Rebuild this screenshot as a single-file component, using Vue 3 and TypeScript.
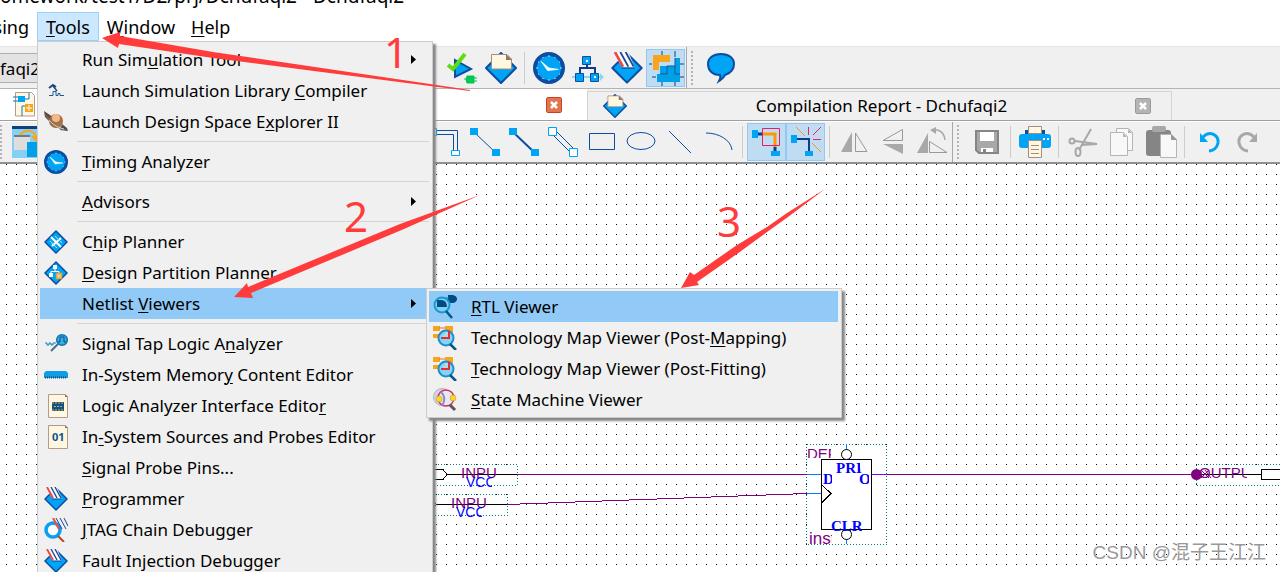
<script setup lang="ts">
interface Entry {
  id: string
  label?: string
  icon?: string
  sub?: boolean
  active?: boolean
}

const parts = (label: string): string[] => {
  const i = label.indexOf('&')
  return i < 0 ? [label, '', ''] : [label.slice(0, i), label[i + 1], label.slice(i + 2)]
}

const tools: Entry[] = [
  { id: 'run', label: 'Run Sim&ulation Tool', sub: true },
  { id: 'lib', label: 'Launch Simulation Library &Compiler', icon: 'simlib' },
  { id: 'dse', label: 'Launch Design Space E&xplorer II', icon: 'planet' },
  { id: 's1' },
  { id: 'time', label: '&Timing Analyzer', icon: 'clock' },
  { id: 's2' },
  { id: 'adv', label: '&Advisors', sub: true },
  { id: 's3' },
  { id: 'chip', label: 'C&hip Planner', icon: 'chip' },
  { id: 'part', label: '&Design Partition Planner', icon: 'partition' },
  { id: 'net', label: 'Netlist &Viewers', sub: true, active: true },
  { id: 's4' },
  { id: 'tap', label: 'Signal Tap Logic A&nalyzer', icon: 'tap' },
  { id: 'mem', label: 'In-System Memor&y Content Editor', icon: 'memory' },
  { id: 'lai', label: 'Logic Analyzer Interface Edito&r', icon: 'logic' },
  { id: 'src', label: 'In&-System Sources and Probes Editor', icon: 'probes' },
  { id: 'pins', label: '&Signal Probe Pins...' },
  { id: 'prog', label: '&Programmer', icon: 'programmer' },
  { id: 'jtag', label: '&JTAG Chain Debugger', icon: 'jtag' },
  { id: 'fault', label: 'Fault Injection Debugger', icon: 'programmer' },
]

const viewers: Entry[] = [
  { id: 'rtl', label: '&RTL Viewer', icon: 'rtl', active: true },
  { id: 'map', label: 'Technology Map Viewer (Post-&Mapping)', icon: 'techmap' },
  { id: 'fit', label: '&Technology Map Viewer (Post-Fitting)', icon: 'techmap' },
  { id: 'fsm', label: '&State Machine Viewer', icon: 'state' },
]
</script>

<template>
  <div class="app">
    <svg class="defs" aria-hidden="true">
      <defs>
        <symbol id="i-simlib" viewBox="0 0 24 24">
          <path d="M5 9l4-3 3 2" fill="none" stroke="#1c4a78" stroke-width="2" />
          <path d="M9 7l4 5" fill="none" stroke="#1c4a78" stroke-width="1.500" />
          <path d="M5 16.500h4v-4h3v4h2v-2h2v2h4" fill="none" stroke="#1c5a8c" stroke-width="1" />
        </symbol>
        <symbol id="i-planet" viewBox="0 0 24 24">
          <path d="M0 1l9 6-3 5-5-5zM24 21l-8-1 2-6 5 4z" fill="#5b4b46" />
          <circle cx="12" cy="11" r="7" fill="#b9683c" />
          <circle cx="12" cy="8" r="4" fill="#f2b988" />
          <path d="M6 11q6 3 12 2M6 13q5 4 11 3" stroke="#6f8a5d" fill="none" />
          <path d="M1 4c3 8 14 17 22 16-5-1-14-6-18-12" fill="#7d6b65" />
          <path d="M5 10c4 5 10 8 15 9" stroke="#e3d6cd" fill="none" />
        </symbol>
        <symbol id="i-clock" viewBox="0 0 24 24">
          <circle cx="12" cy="12" r="10.500" fill="#00a4f4" stroke="#0c4da2" stroke-width="3" />
          <path d="M6 7l6 5 7 1-8 1z" fill="#fff" stroke="#fff" stroke-width=".5" />
          <g fill="#fff">
            <circle cx="12" cy="3" r=".5" /><circle cx="12" cy="21" r=".5" /><circle cx="3" cy="12" r=".5" /><circle cx="21" cy="12" r=".5" />
            <circle cx="7.500" cy="4.200" r=".4" /><circle cx="16.500" cy="4.200" r=".4" /><circle cx="7.500" cy="19.800" r=".4" /><circle cx="16.500" cy="19.800" r=".4" />
            <circle cx="4.200" cy="7.500" r=".4" /><circle cx="19.800" cy="7.500" r=".4" /><circle cx="4.200" cy="16.500" r=".4" /><circle cx="19.800" cy="16.500" r=".4" />
          </g>
        </symbol>
        <symbol id="i-chip" viewBox="0 0 24 24">
          <path d="M12 1l11 11-11 11L1 12z" fill="#00a4f4" stroke="#0c4da2" stroke-width="1.500" stroke-linejoin="round" />
          <path d="M7 7l10 10M17 8l-9 8" stroke="#fff" stroke-width="2" />
          <path d="M11 6l7 7M6 11l7 7" stroke="#a6dcf8" />
        </symbol>
        <symbol id="i-partition" viewBox="0 0 24 24">
          <path d="M12 1l11 11-11 11L1 12z" fill="#00a4f4" stroke="#0c4da2" stroke-width="1.500" stroke-linejoin="round" />
          <path d="M9 4h4v4H9zM5 12h4v4H5z" fill="#fff" />
          <path d="M11 8v3M7 12v-1.500h8v2" fill="none" stroke="#fff" />
          <path d="M12.500 12.500h5v5h-5z" fill="#c9d6c8" stroke="#f6a11c" stroke-width="1.500" />
        </symbol>
        <symbol id="i-tap" viewBox="0 0 24 24">
          <path d="M1 11h2v2h2v-2h2v2h2v-2h3" fill="none" stroke="#1482b4" />
          <circle cx="18" cy="8" r="5.300" fill="#3aaede" stroke="#0678b0" stroke-width="1.500" />
          <path d="M14 10h2V5h4v5h2" fill="none" stroke="#064f87" />
          <path d="M14 12l-7 7" stroke="#466d91" stroke-width="2" />
        </symbol>
        <symbol id="i-memory" viewBox="0 0 24 24">
          <path d="M2 8h20l2 2v5H0v-5z" fill="#109de5" />
          <path d="M1 14.500h22" stroke="#174e7c" stroke-width="2" stroke-dasharray="1 1" />
        </symbol>
        <symbol id="i-logic" viewBox="0 0 24 24">
          <path d="M4.500.5H21l2.500 2.500v20.500h-19z" fill="#fff7df" stroke="#b39a8c" />
          <path d="M21 0v3h3" fill="#8f7468" />
          <path d="M8 8h12v9H8z" fill="#0e538f" />
          <path d="M8 9h12M8 16h12M10 12.500h8" stroke="#edab24" stroke-dasharray="2 1" />
        </symbol>
        <symbol id="i-probes" viewBox="0 0 24 24">
          <path d="M4.500.5H21l2.500 2.500v20.500h-19z" fill="#fff7df" stroke="#b39a8c" />
          <path d="M21 0v3h3" fill="#8f7468" />
          <text x="8" y="16" font-size="11" font-weight="700" fill="#0e538f">01</text>
        </symbol>
        <symbol id="i-programmer" viewBox="0 0 24 24">
          <path d="M12 1l11 11-11 11L1 12z" fill="#00a4f4" stroke="#0c4da2" stroke-width="1.500" stroke-linejoin="round" />
          <path d="M1 0h12l5 12h-9z" fill="#f0f0f0" />
          <path d="M8 12h10" stroke="#0c4da2" stroke-width="1" />
          <path d="M3 0l6 11" stroke="#f04b41" stroke-width="2" />
          <path d="M5 0l6 11M9 0l6 11" stroke="#fff" stroke-width="1" />
          <path d="M7 0l6 11M11 0l6 11" stroke="#17479b" stroke-width="1.300" />
        </symbol>
        <symbol id="i-jtag" viewBox="0 0 24 24">
          <circle cx="9" cy="12" r="7" fill="#fff" stroke="#0aa0f2" stroke-width="3.500" />
          <path d="M14 18l6 6" stroke="#b4471e" stroke-width="2" />
          <path d="M9 0l6 11" stroke="#f04b41" stroke-width="2" />
          <path d="M12 0l6 11M16 0l6 11M20 0l4 8" stroke="#17479b" />
        </symbol>
        <symbol id="i-rtl" viewBox="0 0 24 24">
          <path d="M15 0h5q4 1 4 4t-4 4h-5z" fill="#004b82" />
          <path d="M10 3h6" stroke="#0871a8" />
          <circle cx="9" cy="10" r="7.500" fill="#86cdf2" stroke="#159bd1" stroke-width="2" />
          <path d="M4 12V5h5q5 1 5 7z" fill="#004b82" />
          <path d="M13 16l6 7" stroke="#005989" stroke-width="2.500" />
        </symbol>
        <symbol id="i-techmap" viewBox="0 0 24 24">
          <path d="M0 0h7v5H0zM12 0h8v7h-8zM0 8h7v4H0z" fill="#f9a51b" />
          <path d="M6 2h6" stroke="#e76a47" />
          <circle cx="13" cy="12" r="7.500" fill="#86d4f5" stroke="#1b91c8" stroke-width="2" />
          <path d="M10 11V9h2V6h3v5z" fill="#b5d9e4" />
          <path d="M8 12h8V5" fill="none" stroke="#e52b36" stroke-width="2" />
          <path d="M17 18l6 6" stroke="#005989" stroke-width="2.500" />
        </symbol>
        <symbol id="i-state" viewBox="0 0 24 24">
          <circle cx="9" cy="9" r="8.500" fill="#d0d4e4" stroke="#aeb4ca" />
          <circle cx="13" cy="10" r="8" fill="#e6e8f4" stroke="#d62b59" stroke-width="1.500" />
          <path d="M8 4q6 5 1 14" stroke="#8b8fba" stroke-width="2" fill="none" />
          <circle cx="6" cy="11" r="3" fill="#fdd52c" stroke="#b9941c" stroke-width=".5" />
          <circle cx="20" cy="10" r="3" fill="#fdd52c" stroke="#b9941c" stroke-width=".5" />
          <path d="M17 17l5 5" stroke="#5d5262" stroke-width="3" />
        </symbol>
        <symbol id="i-report" viewBox="0 0 32 32">
          <path d="M16 1l15 15-15 15L1 16z" fill="#00a4f4" stroke="#0c4da2" stroke-width="2" stroke-linejoin="round" />
          <path d="M6.500 2.500H22l4.500 4.500v10h-20z" fill="#fff7df" stroke="#a58c7e" />
          <path d="M21 2v6h6z" fill="#8f7468" />
        </symbol>
      </defs>
    </svg>

    <header class="title">omework/test1/D2/prj/Dchufaqi2 - Dchufaqi2</header>

    <nav class="menubar">
      <button class="menu-btn cut">sing</button>
      <button class="menu-btn open"><u>T</u>ools</button>
      <button class="menu-btn"><u>W</u>indow</button>
      <button class="menu-btn"><u>H</u>elp</button>
    </nav>

    <div class="bar main-bar">
      <div class="combo">faqi2</div>
      <div class="tools first">
        <button class="tool" aria-label="Start compilation check">
          <svg width="32" height="32" viewBox="0 0 32 32">
            <path d="M9 8l16 9-16 8z" fill="#00a4f4" stroke="#0c4da2" stroke-width="2" />
            <path d="M2 13l5 4L19 2" fill="none" stroke="#5fdc14" stroke-width="4" />
            <path d="M21 24h7v7h-7q-2-3 0-7zM18 27h3M28 26h3M28 29h3" fill="#00c853" stroke="#00c853" />
          </svg>
        </button>
        <button class="tool" aria-label="Compilation report"><svg width="32" height="32"><use href="#i-report" /></svg></button>
        <i class="line" />
        <button class="tool" aria-label="Timing analyzer"><svg width="32" height="32"><use href="#i-clock" /></svg></button>
        <button class="tool" aria-label="Netlist hierarchy">
          <svg width="32" height="32" viewBox="0 0 32 32">
            <path d="M0 25h29" stroke="#8bd6f5" stroke-width="2" /><path d="M28 21l4 4-4 4z" fill="#8bd6f5" />
            <path d="M15 12v4M8 21v-5h15v5" fill="none" stroke="#0c3c92" stroke-width="2" />
            <path d="M10.500 4.500h8v8h-8zM3.500 21.500h8v8h-8zM18.500 21.500h8v8h-8z" fill="#00a4f4" stroke="#0c4da2" />
            <path d="M14 8h2v2h-2zM22 24h2v2h-2z" fill="#fff" />
          </svg>
        </button>
        <button class="tool" aria-label="Programmer"><svg width="32" height="32"><use href="#i-programmer" /></svg></button>
        <button class="tool on" aria-label="Chip planner">
          <svg width="36" height="36" viewBox="0 0 36 36">
            <path d="M5 5h17v7H11v8H5z" fill="#f9a51b" />
            <path d="M27 8h5v24H9v-8h3v-8h15z" fill="#00a0e9" />
            <path d="M27 8v8h-8M19 16v8h-7M27 16v8h5" fill="none" stroke="#0c5b96" />
            <path d="M14 1v4M27 1v6M32 14h4M4 27h4M14 32v4M27 32v4M32 27h4M1 14h3" fill="none" stroke="#0c4278" />
          </svg>
        </button>
        <i class="edge" /><i class="grip" />
        <button class="tool talk" aria-label="Feedback">
          <svg width="32" height="32" viewBox="0 0 32 32"><path d="M16 2c8 0 13 4 13 10 0 5-3 9-9 11-1 3-3 4-6 6 1-2 2-4 1-6C7 23 3 18 3 12 3 6 8 2 16 2z" fill="#00a4f4" stroke="#0c4da2" stroke-width="2" /></svg>
        </button>
      </div>
    </div>

    <div class="tabs">
      <div class="tab current">
        <svg width="22" height="26" viewBox="0 0 22 26">
          <path d="M2.500.5h16l3 3v20.500h-19z" fill="#fff7df" stroke="#b39a8c" />
          <path d="M5 4h7v6H5z" fill="#00a4f4" /><path d="M0 5h5M0 9h5M12 7h4V1M9 24V14h6" fill="none" stroke="#0f78bb" />
          <path d="M12 12h8v8h-8z" fill="#f9a51b" /><path d="M16 13v6M13 16h6" stroke="#fff" />
        </svg>
        <button class="close red" aria-label="Close tab"><svg width="14" height="14" viewBox="0 0 14 14"><path d="M4 4l6 6M10 4l-6 6" stroke="#fff" stroke-width="2.500" /></svg></button>
      </div>
      <div class="tab report">
        <svg width="24" height="24"><use href="#i-report" /></svg>
        <span>Compilation Report - Dchufaqi2</span>
        <button class="close" aria-label="Close report"><svg width="14" height="14" viewBox="0 0 14 14"><path d="M4 4l6 6M10 4l-6 6" stroke="#fff" stroke-width="2.500" /></svg></button>
      </div>
    </div>

    <div class="bar draw-bar">
      <i class="grip" />
      <button class="tool detach" aria-label="Detach window">
        <svg width="34" height="32" viewBox="0 0 34 32"><path d="M0 0h34v32H0z" fill="#86d0f3" /><path d="M0 0h34v3H0z" fill="#0c4278" /><path d="M2 9h16v15H2z" fill="#ddd" /><path d="M2 9h16v2H2z" fill="#777" /><path d="M15 16h19v15H15z" fill="#00a0e9" /><path d="M8 9c4-6 14-6 16 2" fill="none" stroke="#f9a51b" stroke-width="2" /><path d="M19 10h9l-4 6z" fill="#f9a51b" /></svg>
      </button>
      <div class="tools second">
        <button class="tool" aria-label="Orthogonal conduit"><svg width="32" height="32" viewBox="0 0 32 32"><path d="M4 4.500h23.500v20M4 8.500h19.500v16" fill="none" stroke="#0c4da2" /><path d="M21.500 24.500h8v5h-8zM.5 2.500h6v7h-6z" fill="#fff" stroke="#00a4f4" /></svg></button>
        <button class="tool" aria-label="Node line"><svg width="32" height="32" viewBox="0 0 32 32"><path d="M5 6l22 21" stroke="#0c4da2" /><path d="M1 2h8v7H1zM23 23h8v7h-8z" fill="#00a4f4" /></svg></button>
        <button class="tool" aria-label="Bus line"><svg width="32" height="32" viewBox="0 0 32 32"><path d="M5 6l22 21" stroke="#0c4da2" stroke-width="2" /><path d="M1 2h8v7H1zM23 23h8v7h-8z" fill="#00a4f4" /></svg></button>
        <button class="tool" aria-label="Conduit line"><svg width="32" height="32" viewBox="0 0 32 32"><path d="M6 9l17 17M10 6l17 17" stroke="#0c4da2" /><path d="M1.500 1.500h8v8h-8zM22.500 22.500h8v8h-8z" fill="#fff" stroke="#00a4f4" /></svg></button>
        <button class="tool" aria-label="Rectangle"><svg width="32" height="32" viewBox="0 0 32 32"><path d="M3.500 7.500h25v16h-25z" fill="none" stroke="#0c4da2" /></svg></button>
        <button class="tool" aria-label="Oval"><svg width="32" height="32" viewBox="0 0 32 32"><ellipse cx="16" cy="15" rx="14" ry="8.500" fill="none" stroke="#0c4da2" /></svg></button>
        <button class="tool" aria-label="Line"><svg width="32" height="32" viewBox="0 0 32 32"><path d="M5 5l22 22" stroke="#0c4da2" /></svg></button>
        <button class="tool" aria-label="Arc"><svg width="32" height="32" viewBox="0 0 32 32"><path d="M3 7c13 0 25 7 26 17" fill="none" stroke="#0c4da2" /></svg></button>
        <i class="line" />
        <button class="tool on" aria-label="Rubberbanding"><svg width="32" height="32" viewBox="0 0 32 32"><path d="M6 8h5M24 21v4" stroke="#0c3c92" stroke-width="3" /><path d="M11 8h13v13" fill="none" stroke="#ff9800" stroke-width="3" /><path d="M11.500 2.500h17v17h-17z" fill="none" stroke="#e91e63" /><path d="M1 4h6v8H1zM20 25h9v5h-9z" fill="#00a4f4" /></svg></button>
        <button class="tool on" aria-label="Partial line selection"><svg width="32" height="32" viewBox="0 0 32 32"><path d="M6 13h13v12" fill="none" stroke="#0c3c92" stroke-width="2" /><path d="M1 9h6v8H1zM15 25h8v5h-8z" fill="#00a4f4" /><path d="M6 1l9 9M22 17l9 9" stroke="#ff9800" /><path d="M18.500 1v8M31 1l-8 8M23 13.500h8" stroke="#e91e63" /></svg></button>
        <i class="line" />
        <button class="tool" aria-label="Flip horizontal"><svg width="32" height="32" viewBox="0 0 32 32"><path d="M14 6v20H3z" fill="#a8a8a8" /><path d="M17.500 7v18.500H29z" fill="none" stroke="#999" /></svg></button>
        <button class="tool" aria-label="Flip vertical"><svg width="32" height="32" viewBox="0 0 32 32"><path d="M25.500 3.500v11H6z" fill="none" stroke="#999" /><path d="M6 18h20v10z" fill="#a8a8a8" /></svg></button>
        <button class="tool" aria-label="Rotate left"><svg width="32" height="32" viewBox="0 0 32 32"><path d="M12 7v20H1z" fill="#a8a8a8" /><path d="M13.500 15.500v11H31z" fill="none" stroke="#999" /><path d="M17 4c6-1 11 2 12 10" fill="none" stroke="#a8a8a8" stroke-width="1.500" /><path d="M14 4l6-3v7z" fill="#a8a8a8" /></svg></button>
        <i class="edge" /><i class="grip" />
        <button class="tool talk" aria-label="Save"><svg width="26" height="26" viewBox="0 0 26 26"><path d="M2 2h22v22H5l-3-3z" fill="#a8a8a8" stroke="#858585" stroke-width="2" /><path d="M6 3h14v9H6zM7 19h12v4H7z" fill="#fff" /><path d="M9 20h3v3H9z" fill="#858585" /></svg></button>
        <i class="line" />
        <button class="tool" aria-label="Print"><svg width="34" height="34" viewBox="0 0 34 34"><path d="M7 5h20v8H7z" fill="#0c4da2" /><rect x="1" y="9" width="32" height="14" rx="3" fill="#00a4f4" /><path d="M10.500 1.500h13v7h-13zM10.500 15.500h13v17h-13z" fill="#fff7df" stroke="#a58c7e" /><path d="M13 20.500h8M13 24.500h8M13 28.500h8" stroke="#a58c7e" /><path d="M25 13h2v2h-2zM29 13h2v2h-2z" fill="#fff" /></svg></button>
        <i class="line" />
        <button class="tool" aria-label="Cut"><svg width="32" height="32" viewBox="0 0 32 32"><path d="M24 3L12 24M8 15l22 3-16 1" fill="none" stroke="#a8a8a8" stroke-width="2" /><circle cx="5" cy="15" r="2.500" fill="none" stroke="#a8a8a8" stroke-width="2" /><ellipse cx="11" cy="26" rx="2.500" ry="4" fill="none" stroke="#a8a8a8" stroke-width="2" /></svg></button>
        <button class="tool" aria-label="Copy"><svg width="32" height="32" viewBox="0 0 32 32"><path d="M10.500 2.500h12l4 4v18h-16z" fill="#f8f8f8" stroke="#b4b4b4" /><path d="M4.500 6.500h13l4 4v19h-17z" fill="#f8f8f8" stroke="#b4b4b4" /><path d="M17 7v4h4zM22 3v4h4z" fill="#b4b4b4" /></svg></button>
        <button class="tool" aria-label="Paste"><svg width="32" height="32" viewBox="0 0 32 32"><rect x="1" y="4" width="25" height="26" rx="3" fill="#858585" /><rect x="7" y="0" width="14" height="6" rx="2" fill="#a8a8a8" /><path d="M15.500 8.500h11l5 5v18h-16z" fill="#f8f8f8" stroke="#b4b4b4" /><path d="M26 8v6h6z" fill="#999" /></svg></button>
        <i class="line" />
        <button class="tool" aria-label="Undo"><svg width="32" height="32" viewBox="0 0 32 32"><path d="M10 11c7-7 16-2 15 6-1 5-5 8-9 8" fill="none" stroke="#00a4f4" stroke-width="3" /><path d="M7 7v9h8z" fill="#00a4f4" /></svg></button>
        <button class="tool" aria-label="Redo"><svg width="32" height="32" viewBox="0 0 32 32"><path d="M22 11c-7-7-16-2-15 6 1 5 5 8 9 8" fill="none" stroke="#a8a8a8" stroke-width="3" /><path d="M25 7v9h-8z" fill="#a8a8a8" /></svg></button>
      </div>
    </div>

    <main class="canvas">
      <svg class="sheet" width="100%" height="100%">
        <defs>
          <pattern id="grid" width="10" height="10" patternUnits="userSpaceOnUse"><rect x="6" y="0" width="1" height="1" fill="#000" /></pattern>
          <clipPath id="symbol-texts">
            <path d="M440 300h57v14h-5v12h-45zM440 330h47v14h-5v15h-42zM1197 300h50v15h-50zM807 282h24v12h-24zM836 295h24v16h-24zM822 305h10v16h-10zM858 305h11v15h-11zM830 350h32v17h-32zM807 368h25v14h-25z" />
          </clipPath>
        </defs>
        <rect width="100%" height="100%" fill="url(#grid)" shape-rendering="crispEdges" />
        <g shape-rendering="crispEdges" fill="none">
          <g stroke="#008080" stroke-dasharray="1 2">
            <path d="M420 300.500h97.500v21H420M420 330.500h87.500v21H420" fill="#fff" />
            <path d="M806.500 280.500h80v100h-80zM1280 300.500h-83.500v21h83.500" fill="#fff" />
          </g>
          <path d="M430 305.500h13l4 5-4 5h-13M447 310.500h70M430 336l7 4.500-7 4M437 340.500h70M1200 310.500h61M1290 305.500h-28.500v10h28.500" stroke="#000" />
          <path d="M517 310.500h290M507 340.500l300-11M872 310.500h325" stroke="#800080" />
          <path d="M807 310.500h15M807 329.500h15M846.500 280v6M846.500 375v5" stroke="#0080ff" />
          <path d="M821.500 295.500h50v70h-50z" fill="#fff" stroke="#000" />
          <path d="M822 321l9 8.500-9 9" stroke="#000" />
          <path d="M872 310.500h15" stroke="#8000ff" />
        </g>
        <circle cx="846.500" cy="290.500" r="5" fill="#fff" stroke="#000" />
        <circle cx="846.500" cy="370.500" r="5" fill="#fff" stroke="#000" />
        <circle cx="1196.500" cy="310.500" r="5.500" fill="#800080" />
        <path d="M1201 306l8 8M1201 314l8-8M1205 306l6 8" stroke="#800080" fill="none" />
        <g clip-path="url(#symbol-texts)">
          <g class="pin"><text x="461" y="314">INPU</text><text x="451" y="344">INPU</text><text x="1199" y="314">OUTPU</text><text x="807" y="295">DEF</text></g>
          <g class="vcc"><text x="466" y="323">VCC</text><text x="456" y="353">VCC</text></g>
          <g class="port"><text x="836" y="309">PRI</text><text x="823" y="320">D</text><text x="859" y="320">Q</text><text x="831" y="367">CLR</text></g>
          <text class="inst" x="809" y="380">inst</text>
        </g>
      </svg>
      <div class="watermark">CSDN @混子王江江</div>
    </main>

    <ul class="menu tools-menu">
      <li v-for="e in tools" :key="e.id" :class="{ sep: !e.label }">
        <button v-if="e.label" class="entry" :class="{ active: e.active }">
          <span class="icon"><svg v-if="e.icon" width="24" height="24"><use :href="'#i-' + e.icon" /></svg></span>
          <span class="label">{{ parts(e.label)[0] }}<u>{{ parts(e.label)[1] }}</u>{{ parts(e.label)[2] }}</span>
          <svg v-if="e.sub" class="arrow" width="5" height="9" viewBox="0 0 5 9"><path d="M0 0l5 4.500L0 9z" /></svg>
        </button>
      </li>
    </ul>

    <ul class="menu viewers-menu">
      <li v-for="e in viewers" :key="e.id">
        <button class="entry" :class="{ active: e.active }">
          <span class="icon"><svg width="24" height="24"><use :href="'#i-' + e.icon" /></svg></span>
          <span class="label">{{ parts(e.label!)[0] }}<u>{{ parts(e.label!)[1] }}</u>{{ parts(e.label!)[2] }}</span>
        </button>
      </li>
    </ul>

    <svg class="notes" width="100%" height="100%">
      <path d="M102 38l18-6v4l93 16 217 32 40 6v1l-40-5-217-28-94-14-1 4z" />
      <path d="M234 297l13-14 1 4 152-63 80-29-76 34-153 64 2 5z" />
      <path d="M681 288L690 272L694 275L737 245L767 227L787 213L825 189L788 217L767 232L737 254L697 282L699 285z" />
      <text x="384" y="68">1</text><text x="344" y="232">2</text><text x="717" y="237">3</text>
    </svg>
  </div>
</template>

<style>
body { margin: 0; overflow: hidden; }
</style>

<style scoped>
.app { position: relative; display: flex; flex-direction: column; height: 100vh; overflow: hidden; background: #fff; color: #000; font: 17px/24px "Noto Sans", "Open Sans", sans-serif; }
.defs { position: absolute; width: 0; height: 0; }
button { font: inherit; color: inherit; border: 0; margin: 0; padding: 0; background: none; }
svg { display: block; flex: none; }
u { text-underline-offset: 2px; text-decoration-thickness: 1px; }
.title { flex: none; display: flex; align-items: flex-end; height: 12px; font-size: 19px; line-height: 32px; white-space: nowrap; overflow: hidden; }
.menubar { flex: none; display: flex; height: 34px; align-items: flex-start; font-size: 18px; }
.menu-btn { height: 29px; padding: 0 8px; box-sizing: border-box; border: 1px solid transparent; border-width: 1px 0; line-height: 28px; }
.menu-btn.cut { width: 37px; padding: 0 8px 0 0; display: flex; justify-content: flex-end; }
.menu-btn.open { background: #cce8ff; border: 1px solid #99d1ff; }
.bar { flex: none; display: flex; align-items: center; background: #f0f0f0; box-sizing: border-box; }
.main-bar { height: 43px; border-top: 1px solid #e4e4e4; border-bottom: 1px solid #b4b4b4; }
.combo { width: 40px; height: 28px; line-height: 30px; border: solid #b0b0b0; border-width: 1px 0; background: #e3e3e3; overflow: hidden; }
.tools { display: flex; align-items: center; height: 100%; }
.first { margin-left: 402px; }
.tool { display: flex; flex: none; align-items: center; justify-content: center; width: 39px; height: 38px; box-sizing: border-box; }
.on { background: #c0dcf3; border: 1px solid #90c8f6; }
.line { flex: none; width: 1px; height: 32px; margin: 0 4px; background: #ccc; }
.edge { flex: none; width: 1px; height: 100%; margin-left: 1px; background: #a8a8a8; }
.grip { flex: none; width: 2px; height: 34px; margin-left: 4px; background: repeating-linear-gradient(#b4b4b4 0 2px, transparent 2px 4px); }
.talk { margin-left: 8px; }
.tabs { flex: none; display: flex; align-items: stretch; height: 32px; box-sizing: border-box; background: #f0f0f0; border-bottom: 1px solid #a0a0a0; }
.tab { display: flex; align-items: center; box-sizing: border-box; }
.current { width: 587px; justify-content: space-between; padding: 0 26px 0 13px; background: #fff; }
.report { width: 585px; justify-content: space-between; margin-top: 2px; padding: 0 21px 0 15px; border: solid #d4d4d4; border-width: 1px 1px 0; }
.close { display: flex; width: 14px; height: 14px; box-sizing: border-box; background: #b4b4b4; outline: 1px solid #999; border-radius: 1px; align-items: center; justify-content: center; }
.red { background: #e07650; outline-color: #d03c28; }
.draw-bar { height: 43px; border-top: 1px solid #fff; border-bottom: 2px solid #8c9196; }
.draw-bar > .grip { margin-left: 0; }
.detach { width: 34px; margin-left: 10px; }
.second { margin-left: 380px; }
.canvas { position: relative; flex: 1; min-height: 0; background: #fff; overflow: hidden; }
.sheet { position: absolute; inset: 0; }
.pin { font: 15px "Liberation Sans", Arial, sans-serif; fill: #800080; }
.vcc { font: 14px "Liberation Sans", Arial, sans-serif; fill: #00f; }
.port { font: bold 15px "Liberation Serif", serif; fill: #00f; }
.inst { font: 17px "Liberation Sans", Arial, sans-serif; fill: #800080; }
.watermark { position: absolute; right: 14px; bottom: 6px; font: 19px/26px "Liberation Sans", "Noto Sans CJK SC", sans-serif; color: #999; }
.menu { position: absolute; margin: 0; padding: 2px; box-sizing: border-box; list-style: none; background: #f0f0f0; border: 1px solid #ccc; box-shadow: 3px 3px 2px #888; }
.tools-menu { top: 41px; left: 37px; width: 396px; }
.viewers-menu { top: 288px; left: 426px; width: 416px; padding-right: 3px; }
.entry { display: flex; align-items: center; width: 100%; height: 31px; padding: 0 14px 0 4px; text-align: left; white-space: nowrap; }
.entry.active { background: #91c9f7; }
.icon { flex: none; width: 38px; height: 24px; }
.label { flex: 1; }
.sep { height: 1px; margin: 4px 1px 4px 37px; background: #d4d4d4; }
.notes { position: absolute; inset: 0; pointer-events: none; fill: #ff3b3b; font: 42px "Noto Sans", sans-serif; }
</style>
